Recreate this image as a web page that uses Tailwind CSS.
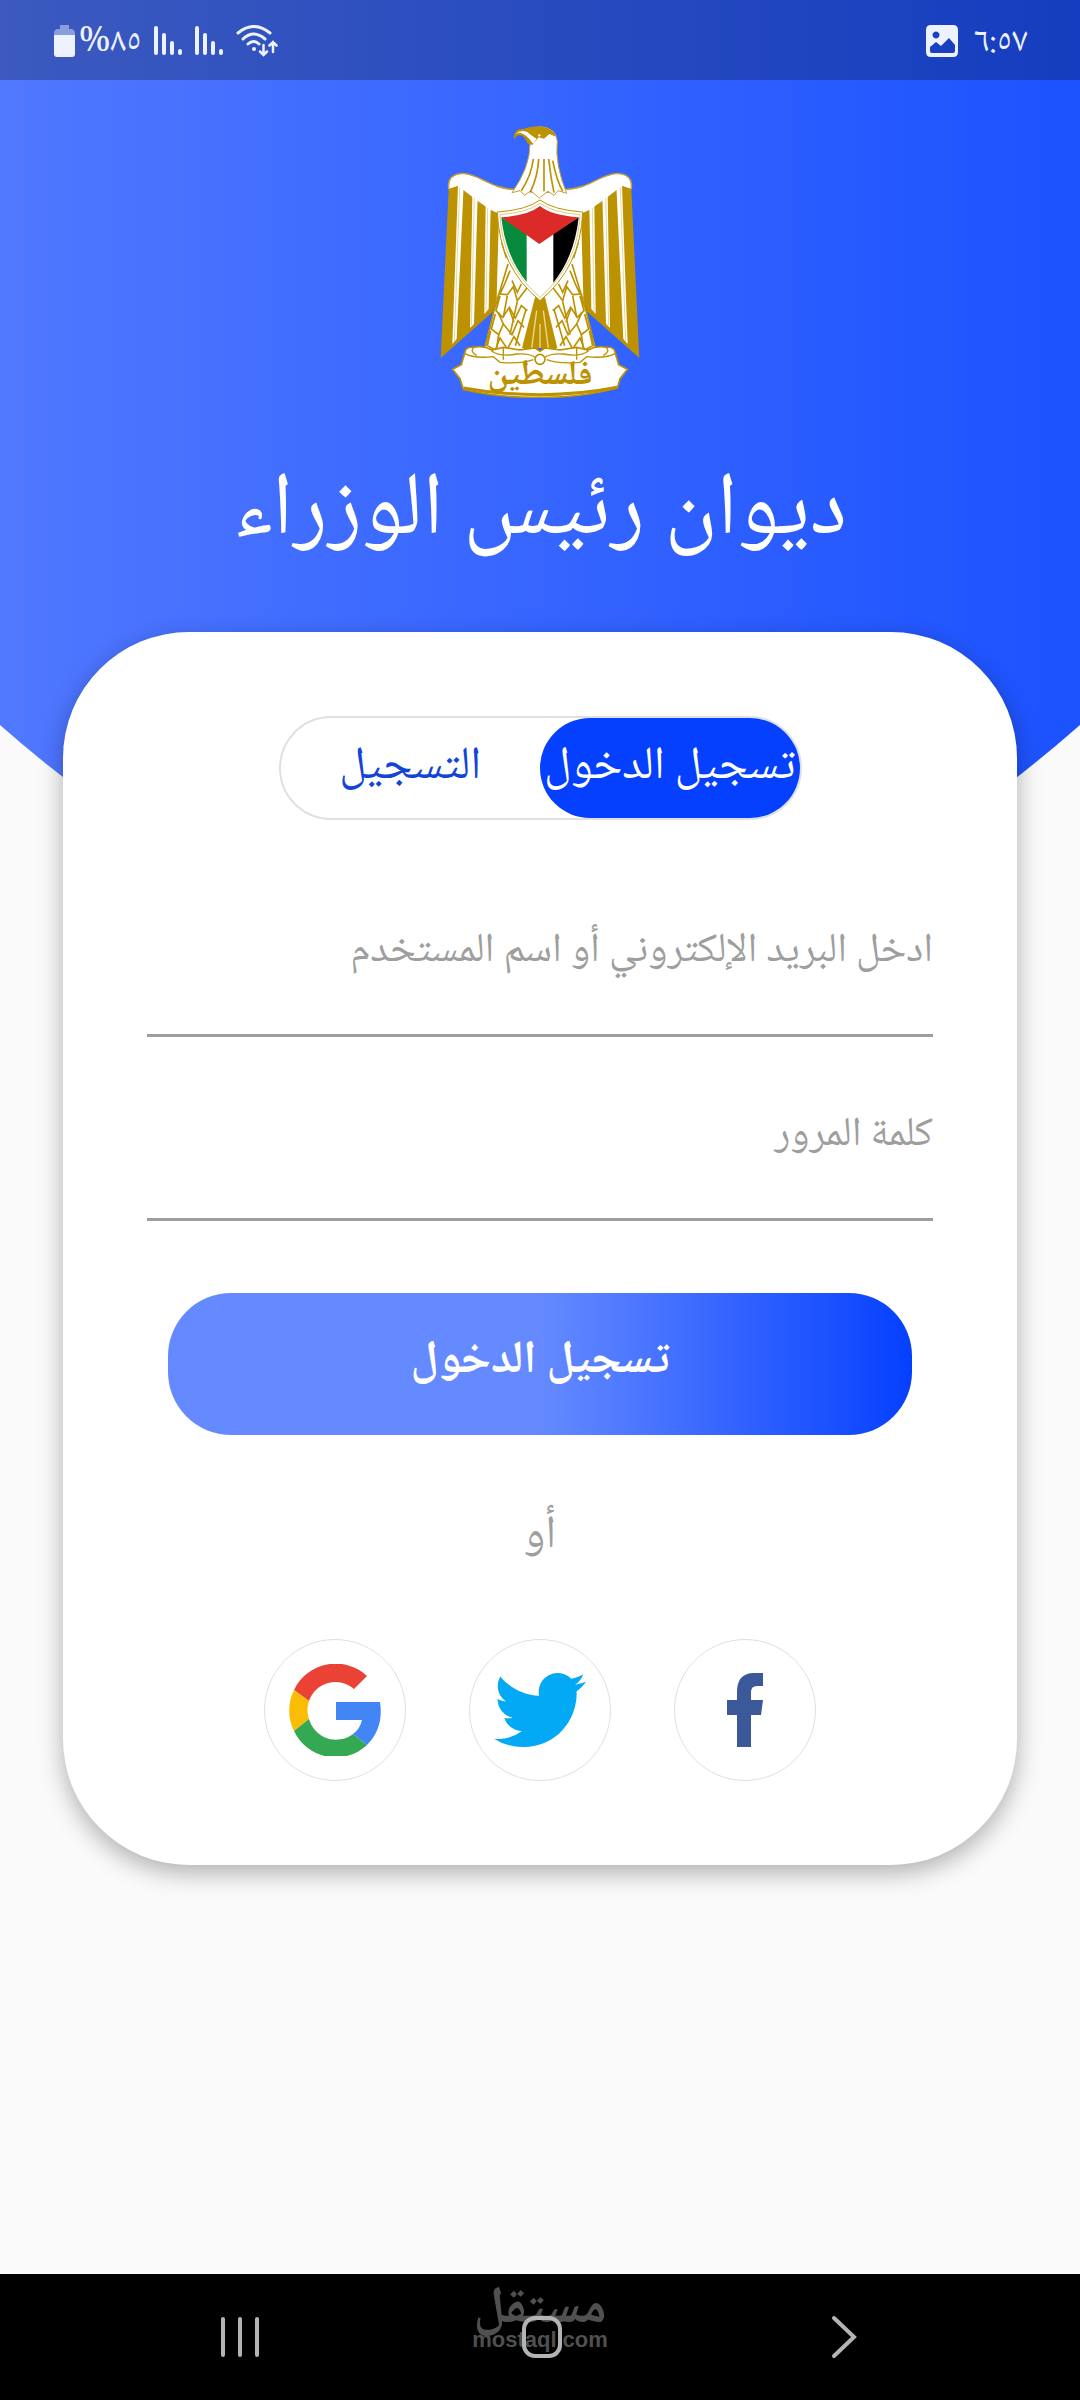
<!DOCTYPE html>
<html lang="ar" dir="rtl">
<head>
    <meta charset="UTF-8">
    <meta name="viewport" content="width=device-width, initial-scale=1.0">
    <title>تسجيل الدخول</title>
    <script src="https://cdn.jsdelivr.net/npm/@tailwindcss/browser@4"></script>
    <style>
        body {
            font-family: 'Noto Naskh Arabic', 'Noto Sans Arabic', 'DejaVu Sans', sans-serif;
        }
    </style>
</head>
<body class="relative flex min-h-screen flex-col bg-[#fafafa]">
    <!-- curved backdrop -->
    <svg class="absolute inset-x-0 top-0 h-[1000px] w-full" viewBox="0 0 1080 1000" preserveAspectRatio="none" aria-hidden="true">
        <defs>
            <linearGradient id="sky" x1="0" x2="1" y1="0" y2="0">
                <stop offset="0" stop-color="#5078ff"/>
                <stop offset="1" stop-color="#1c52ff"/>
            </linearGradient>
        </defs>
        <path d="M0 0H1080V725Q540 1200 0 725Z" fill="url(#sky)"/>
    </svg>

    <header class="relative flex h-20 items-center justify-between bg-black/25 px-[52px] pt-0.5 text-[#eef2ff]">
        <div class="flex items-center gap-4">
            <span class="pt-1.5 text-[35px] leading-10">٦:٥٧</span>
            <svg class="size-8" viewBox="0 0 32 32" fill="currentColor" aria-hidden="true">
                <path fill-rule="evenodd" d="M5 0H27Q32 0 32 5V27Q32 32 27 32H5Q0 32 0 27V5Q0 0 5 0ZM10 6.500a3.500 3.500 0 1 0 .01 0ZM4 26Q4 28 6 28H27Q29 28 29 26V20L23 13L15 21L10 17L4 22Z"/>
            </svg>
        </div>
        <div class="flex items-center gap-3">
            <svg class="h-8 w-[42px]" viewBox="0 0 42 32" fill="none" stroke="currentColor" stroke-width="3" stroke-linecap="round" aria-hidden="true">
                <path d="M2 8Q17.500 -5 34 8M7 14Q17.500 4 29 14M12 19Q17.500 14 23 19"/>
                <circle cx="18" cy="24" r="2" fill="currentColor" stroke="none"/>
                <path stroke-width="2.500" d="M27.500 20V30M24 26.500L27.500 30L31 26.500M37 27V17M33.500 20.500L37 17L40.500 20.500"/>
            </svg>
            <svg class="h-8 w-[29px]" viewBox="0 0 29 32" fill="none" stroke="currentColor" stroke-width="4" stroke-linecap="round" aria-hidden="true">
                <path d="M2 3V28M10 10V28M18 18V28M26 26V28"/>
            </svg>
            <svg class="h-8 w-[29px]" viewBox="0 0 29 32" fill="none" stroke="currentColor" stroke-width="4" stroke-linecap="round" aria-hidden="true">
                <path d="M2 3V28M10 10V28M18 18V28M26 26V28"/>
            </svg>
            <div class="flex items-center gap-1 pl-0.5">
                <span class="pt-1.5 text-[35px] leading-10" dir="ltr">%٨٥</span>
                <svg class="h-8 w-[21px]" viewBox="0 0 21 32" fill="currentColor" aria-hidden="true">
                    <path opacity=".45" d="M6 0H15V4H18Q21 5 21 8V11H0V8Q0 5 3 4H6Z"/>
                    <path d="M0 10H21V29Q21 32 18 32H3Q0 32 0 29Z"/>
                </svg>
            </div>
        </div>
    </header>

    <main class="relative flex grow flex-col items-center px-[63px]">
        <svg class="mt-[46px] h-[272px] w-[200px]" viewBox="60 46 600 816" role="img" aria-label="فلسطين">
            <defs>
                <g id="wing">
                    <path d="M86 236Q80 190 128 188C180 190 215 236 285 236L360 250V300L250 312L262 470L218 604L62 742Z" fill="#bd9200"/>
                    <path d="M88 234Q82 192 128 190C180 192 215 238 285 238L360 250V290L244 312L212 298L172 270L130 238L112 226Z" fill="#fff"/>
                    <path d="M114 224H131L110 685L97 700ZM157 255H173L162 640L150 652ZM197 285H212L206 595L193 610ZM237 306L248 312L244 400L262 460L230 560Z" fill="#fff"/>
                    <path d="M119 230L103 690M163 262L154 645M203 292L198 603" stroke="#e6cf86" stroke-width="2.500" fill="none"/>
                    <path d="M86 236Q80 190 128 188C180 190 215 236 285 236" fill="none" stroke="#c9a332" stroke-width="4"/>
                </g>
                <g id="leg">
                    <path d="M258 440L360 560L312 715L190 722L222 600Z" fill="#fff"/>
                    <g fill="none" stroke="#bd9200" stroke-width="5">
                        <path d="M264 460L222 600L194 715M270 480L254 520L240 550L262 552L280 528L292 570L322 530M240 555L228 600L248 620L268 590L286 622L304 585L322 600M226 610L214 655L236 672L250 640L276 672L294 630L312 650M212 660L202 705L226 718L240 682L262 715L282 678L300 705"/>
                        <path d="M262 555L250 620M292 572L270 672M318 596L286 705M236 672L230 712M268 595L282 635M250 640L234 605M276 510L292 545L304 520"/>
                    </g>
                </g>
            </defs>
            <use href="#wing"/>
            <use href="#wing" transform="matrix(-1 0 0 1 720 0)"/>
            <use href="#leg"/>
            <use href="#leg" transform="matrix(-1 0 0 1 720 0)"/>
            <!-- tail -->
            <path d="M345 560H375L412 712L385 724L360 710L338 724L306 712Z" fill="#bd9200"/>
            <path d="M350 600L334 720M370 600L386 720M360 640V712" stroke="#ecd999" stroke-width="4" fill="none"/>
            <!-- neck and head -->
            <path d="M330 100Q330 170 276 246L300 240L314 254L332 240L358 262L384 242L402 254L414 240L440 248Q404 160 412 92Q408 50 360 48Q340 50 325 56Z" fill="#fff" stroke="#c9a332" stroke-width="3"/>
            <path d="M282 88Q278 52 312 54Q340 44 372 50Q400 54 408 78L388 70L372 84L356 80L338 102Q336 104 322 98Q314 72 296 74Q286 76 282 88Z" fill="#bd9200"/>
            <path d="M288 70Q300 56 322 64Q340 80 350 84L340 100Q318 68 298 66Z" fill="#fff"/>
            <circle cx="358" cy="74" r="3.500" fill="#fff"/>
            <path d="M340 145Q334 195 304 240M356 145Q354 195 332 242M372 145V242M386 145Q392 200 402 246M398 150Q410 210 428 242" fill="none" stroke="#bd9200" stroke-width="5"/>
            <!-- shield -->
            <path d="M360 268Q400 298 488 304Q482 470 360 570Q238 470 232 304Q320 298 360 268Z" fill="#fff" stroke="#bd9200" stroke-width="3"/>
            <path d="M360 278Q400 306 480 312Q474 462 360 560Q246 462 240 312Q320 306 360 278Z" fill="#fff" stroke="#d9bd66" stroke-width="2.500"/>
            <path d="M244 320L320 368V514Q256 436 244 320Z" fill="#078a3c"/>
            <path d="M476 320L400 368V516Q464 436 476 320Z" fill="#000"/>
            <path d="M360 286Q394 314 476 320L358 400L244 320Q326 314 360 286Z" fill="#dc2a28"/>
            <!-- scroll -->
            <path d="M134 728Q136 708 160 710Q190 704 216 718L250 710L300 718L345 712L360 722L375 712L420 718L470 710L504 718Q530 704 560 710Q584 708 586 728L596 762L622 776L600 804L592 832Q480 862 360 860Q240 862 130 836L120 804L98 776L124 762Z" fill="#fff" stroke="#bd9200" stroke-width="5"/>
            <path d="M130 832Q240 852 360 852Q480 852 592 830" fill="none" stroke="#bd9200" stroke-width="9"/>
            <path d="M134 728Q160 744 220 738L240 755Q300 761 340 747M586 728Q560 744 500 738L480 755Q420 761 380 747M160 712Q150 724 170 734M214 720Q240 740 290 730Q330 728 345 740M506 720Q480 740 430 730Q390 728 375 740M560 712Q570 724 550 734M250 712V747M470 712V747" fill="none" stroke="#bd9200" stroke-width="4"/>
            <circle cx="360" cy="746" r="15" fill="#fff" stroke="#bd9200" stroke-width="5"/>
            <text x="360" y="820" text-anchor="middle" font-size="104" font-weight="bold" fill="#bd9200" direction="rtl">فلسطين</text>
        </svg>

        <h1 class="mt-[46px] text-[89px] leading-[140px] text-white">ديوان رئيس الوزراء</h1>

        <section class="mt-12 flex w-full flex-col items-center rounded-[126px] bg-white px-[84px] pt-[84px] pb-[84px] shadow-[0_8px_24px_rgba(0,0,0,0.3)]">
            <div class="grid h-[104px] w-[523px] grid-cols-2 rounded-full border-2 border-[#e0e0e0] text-[46px] leading-[80px]">
                <button type="button" class="rounded-full bg-[#0540ff] whitespace-nowrap text-white">تسجيل الدخول</button>
                <button type="button" class="rounded-full whitespace-nowrap text-[#1245d6]">التسجيل</button>
            </div>

            <form class="flex w-full flex-col items-center">
                <label for="user" class="sr-only">البريد الإلكتروني أو اسم المستخدم</label>
                <input id="user" type="text" placeholder="ادخل البريد الإلكتروني أو اسم المستخدم" class="mt-[33px] h-[184px] w-full border-b-3 border-[#9e9e9e] pt-4 text-[41px] outline-none placeholder:text-[#9e9e9e]">
                <label for="password" class="sr-only">كلمة المرور</label>
                <input id="password" type="password" placeholder="كلمة المرور" class="h-[184px] w-full border-b-3 border-[#9e9e9e] pt-4 text-[41px] outline-none placeholder:text-[#9e9e9e]">
                <div class="mt-[72px] flex w-full px-[21px]">
                    <button type="submit" class="h-[142px] grow rounded-[63px] bg-[linear-gradient(to_left,#0540ff,#658aff_50%)] pb-1 text-[46px] leading-[80px] font-bold text-white">تسجيل الدخول</button>
                </div>
            </form>

            <p class="mt-[62px] text-[46px] leading-[80px] text-[#9e9e9e]">أو</p>

            <div class="mt-[62px] flex gap-[63px]">
                <button type="button" aria-label="Facebook" class="flex size-[142px] items-center justify-center rounded-full border border-[#e0e0e0]">
                    <svg class="h-[74px] w-9" viewBox="0 0 36 74" fill="#3b5998" aria-hidden="true">
                        <path d="M10 74V42H0V27H10V19Q10 0 27 0H36V13H30Q24 13 24 19V27H36L34 42H24V74Z"/>
                    </svg>
                </button>
                <button type="button" aria-label="Twitter" class="flex size-[142px] items-center justify-center rounded-full border border-[#e0e0e0]">
                    <svg class="h-[76px] w-[92px]" viewBox="0 2 24 20" preserveAspectRatio="none" fill="#03a9f4" aria-hidden="true">
                        <path d="M23.950 4.570a10 10 0 0 1-2.820.770 4.960 4.960 0 0 0 2.160-2.720c-.950.550-2 .950-3.120 1.180a4.920 4.920 0 0 0-8.380 4.480C7.690 8.090 4.070 6.130 1.640 3.160a4.820 4.820 0 0 0-.670 2.480c0 1.710.870 3.210 2.190 4.100a4.900 4.900 0 0 1-2.230-.620v.060a4.920 4.920 0 0 0 3.950 4.830 5 5 0 0 1-2.210.080 4.940 4.940 0 0 0 4.600 3.420A9.870 9.870 0 0 1 0 19.540a13.990 13.990 0 0 0 7.560 2.210c9.050 0 14-7.500 14-13.980 0-.210 0-.420-.020-.630a9.940 9.940 0 0 0 2.460-2.550z"/>
                    </svg>
                </button>
                <button type="button" aria-label="Google" class="flex size-[142px] items-center justify-center rounded-full border border-[#e0e0e0]">
                    <svg class="size-[92px]" viewBox="0 0 92 92" aria-hidden="true">
                        <path d="M5 26A46 46 0 0 1 78 12L65 25A28 28 0 0 0 20 37Z" fill="#ea4335"/>
                        <path d="M5 26A46 46 0 0 0 5 67L20 55A28 28 0 0 1 20 37Z" fill="#fbbc05"/>
                        <path d="M5 67A46 46 0 0 0 78 81L64 70A28 28 0 0 1 20 55Z" fill="#34a853"/>
                        <path d="M47 38H91Q95 64 78 81L64 70Q71 65 73 56H47Z" fill="#4285f4"/>
                    </svg>
                </button>
            </div>
        </section>
    </main>

    <nav class="relative grid h-[126px] grid-cols-3 items-center bg-black pr-[85px] pl-[89px] text-[#b4b4b4]" dir="ltr">
        <div class="absolute inset-x-0 top-[18px] text-center font-bold text-[#505050]" aria-hidden="true">
            <div class="text-[52px] leading-[38px]" dir="rtl">مستقل</div>
            <div class="font-['Liberation_Sans'] text-[22px] leading-5">mostaql.com</div>
        </div>
        <button type="button" aria-label="Recent apps" class="relative flex justify-center">
            <svg class="h-11 w-10" viewBox="0 0 40 44" fill="none" stroke="currentColor" stroke-width="4" stroke-linecap="round">
                <path d="M3 4V40M20 4V40M37 4V40"/>
            </svg>
        </button>
        <button type="button" aria-label="Home" class="relative flex justify-center">
            <svg class="h-11 w-11" viewBox="0 0 44 44" fill="none" stroke="currentColor" stroke-width="4">
                <rect x="4" y="3" width="36" height="38" rx="11"/>
            </svg>
        </button>
        <button type="button" aria-label="Back" class="relative flex justify-center">
            <svg class="h-11 w-7" viewBox="0 0 28 44" fill="none" stroke="currentColor" stroke-width="4" stroke-linecap="round">
                <path d="M4 3L24 22L4 41"/>
            </svg>
        </button>
    </nav>
</body>
</html>
